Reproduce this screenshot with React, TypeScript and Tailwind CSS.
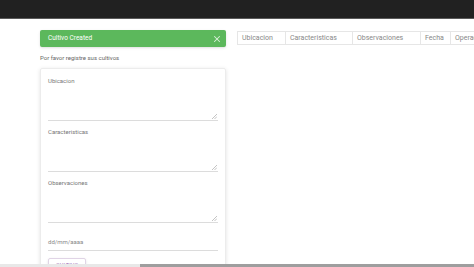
import { X } from 'lucide-react';

const campos = ['Ubicacion', 'Caracteristicas', 'Observaciones'];
const columnas = [
  { t: 'Ubicacion', w: 'w-[48px]' },
  { t: 'Caracteristicas', w: 'w-[67px]' },
  { t: 'Observaciones', w: 'w-[68px]' },
  { t: 'Fecha', w: 'w-[30px]' },
  { t: 'Operaciones', w: 'w-[60px]' },
];

export default function App() {
  return (
    <div className="h-[267px] w-[474px] overflow-hidden bg-white font-['Roboto',sans-serif] text-[#757575]">
      <nav className="h-[19px] border-b border-[#5a5a5a] bg-[#212121]" />

      <div className="flex gap-[11px] pl-[40px] pt-[11px]">
        <div className="w-[186px] shrink-0">
          <div className="flex h-[17px] items-center justify-between rounded-[2px] bg-[#5cb85c] pl-[8px] pr-[4px] text-[6.5px] text-white shadow-sm">
            <span>Cultivo Created</span>
            <X size={10} strokeWidth={2.5} className="text-[#d9f0d9]" />
          </div>

          <p className="mt-[7px] text-[6px] leading-[8px] text-[#666]">
            Por favor registre sus cultivos
          </p>

          <div className="mt-[6px] h-[220px] rounded-[2px] border border-[#ececec] px-[7px] pt-[8px] text-[6px] leading-[8px] shadow-[0_1px_4px_rgba(0,0,0,0.12)]">
            {campos.map((c) => (
              <div key={c} className="relative mb-[7px] h-[44px] border-b border-[#dcdcdc]">
                <div className="text-[#777]">{c}</div>
                <svg
                  width="5"
                  height="5"
                  viewBox="0 0 5 5"
                  className="absolute bottom-[1px] right-[1px]"
                >
                  <path d="M5 0 L0 5 M5 2.5 L2.5 5" stroke="#aaa" strokeWidth="0.7" />
                </svg>
              </div>
            ))}
            <div className="mt-[15px] h-[13px] border-b border-[#dcdcdc] text-[#888]">dd/mm/aaaa</div>
            <button className="mt-[7px] h-[14px] rounded-[2px] border border-[#e0d4e6] px-[7px] text-[5.5px] leading-[8px] tracking-wide text-[#a16fb5] shadow-sm">
              CULTIVO
            </button>
          </div>
        </div>

        <div className="shrink-0 pt-[1px]">
          <table className="w-[273px] table-fixed border-collapse text-[7px] text-[#888]">
            <thead>
              <tr className="h-[13px]">
                {columnas.map((c) => (
                  <th
                    key={c.t}
                    className={`${c.w} overflow-hidden border border-[#e6e6e6] px-[4px] text-left font-normal whitespace-nowrap`}
                  >
                    {c.t}
                  </th>
                ))}
              </tr>
            </thead>
          </table>
        </div>
      </div>

      <div className="fixed bottom-0 left-0 flex h-[3px] w-[474px] bg-[#e8e8e8]">
        <div className="ml-[140px] flex-1 bg-[#9e9e9e]" />
      </div>
    </div>
  );
}
